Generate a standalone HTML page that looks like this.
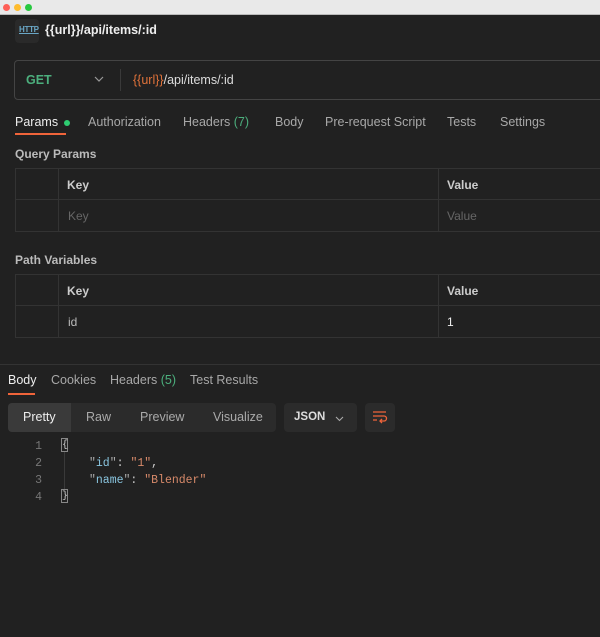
<!DOCTYPE html>
<html><head><style>
*{margin:0;padding:0;box-sizing:border-box}
body{width:600px;height:637px;background:#212121;font-family:"Liberation Sans",sans-serif;color:#fff;position:relative;overflow:hidden;font-size:12px}
.a{position:absolute}
.tb{left:0;top:0;width:600px;height:15px;background:#e9e9e9;border-bottom:1px solid #bbb}
.dot{top:4px;width:7px;height:7px;border-radius:50%}
.tab{top:115px;color:#a8a8a8;font-size:12.5px}
.g{color:#4caf7d}
.tbl{left:15px;width:600px;border:1px solid #333}
.row{height:31px;border-bottom:1px solid #333;position:relative}
.row:last-child{border-bottom:none}
.c1{position:absolute;left:42px;top:0;bottom:0;border-left:1px solid #333}
.c2{position:absolute;left:422px;top:0;bottom:0;border-left:1px solid #333}
.t{position:absolute;top:9px;font-size:12px}
.ln{left:28px;color:#777;font-family:"Liberation Mono",monospace;font-size:11.5px;width:14px;text-align:right}
.code{font-family:"Liberation Mono",monospace;font-size:11.5px}
</style></head><body>
<div class="a tb"></div>
<div class="a dot" style="left:3px;background:#fe5f57"></div>
<div class="a dot" style="left:14px;background:#febc2e"></div>
<div class="a dot" style="left:25px;background:#28c840"></div>
<div class="a" style="left:15px;top:19px;width:24px;height:24px;background:#2a2a2a;border-radius:4px"></div>
<div class="a" style="left:19px;top:25px;font-size:8px;color:#6aa7c6;font-weight:bold;letter-spacing:-0.3px;text-decoration:underline">HTTP</div>
<div class="a" style="left:45px;top:23px;font-size:12.5px;color:#eee;font-weight:bold">{{url}}/api/items/:id</div>
<div class="a" style="left:14px;top:60px;width:600px;height:40px;border:1px solid #444;border-radius:4px"></div>
<div class="a" style="left:26px;top:73px;color:#4caf7d;font-weight:bold;font-size:12.5px">GET</div>
<svg class="a" style="left:94px;top:76px" width="10" height="6" viewBox="0 0 10 6"><path d="M1 1l4 4 4-4" stroke="#999" stroke-width="1.2" fill="none"/></svg>
<div class="a" style="left:120px;top:69px;width:1px;height:22px;background:#3a3a3a"></div>
<div class="a" style="left:133px;top:73px;font-size:12.5px;color:#ddd"><span style="color:#e0723a">{{url}}</span>/api/items/:id</div>
<div class="a tab" style="left:15px;color:#eee">Params <span style="display:inline-block;width:6px;height:6px;border-radius:50%;background:#2ecc71;vertical-align:middle;margin-left:2px"></span></div>
<div class="a" style="left:15px;top:133px;width:51px;height:2px;background:#f0643a"></div>
<div class="a tab" style="left:88px">Authorization</div>
<div class="a tab" style="left:183px">Headers <span class="g">(7)</span></div>
<div class="a tab" style="left:275px">Body</div>
<div class="a tab" style="left:325px">Pre-request Script</div>
<div class="a tab" style="left:447px">Tests</div>
<div class="a tab" style="left:500px">Settings</div>
<div class="a" style="left:15px;top:147px;color:#bbb;font-weight:bold;font-size:12px">Query Params</div>
<div class="a tbl" style="top:168px">
<div class="row"><div class="c1"></div><div class="c2"></div><span class="t" style="left:51px;color:#ccc;font-weight:bold">Key</span><span class="t" style="left:431px;color:#ccc;font-weight:bold">Value</span></div>
<div class="row"><div class="c1"></div><div class="c2"></div><span class="t" style="left:52px;color:#666">Key</span><span class="t" style="left:431px;color:#666">Value</span></div>
</div>
<div class="a" style="left:15px;top:253px;color:#bbb;font-weight:bold;font-size:12px">Path Variables</div>
<div class="a tbl" style="top:274px">
<div class="row"><div class="c1"></div><div class="c2"></div><span class="t" style="left:51px;color:#ccc;font-weight:bold">Key</span><span class="t" style="left:431px;color:#ccc;font-weight:bold">Value</span></div>
<div class="row"><div class="c1"></div><div class="c2"></div><span class="t" style="left:52px;color:#bbb">id</span><span class="t" style="left:431px;color:#eee">1</span></div>
</div>
<div class="a" style="left:0;top:364px;width:600px;height:1px;background:#333"></div>
<div class="a" style="left:8px;top:373px;font-size:12.5px;color:#eee">Body</div>
<div class="a" style="left:8px;top:393px;width:27px;height:2px;background:#f0643a"></div>
<div class="a" style="left:51px;top:373px;font-size:12.5px;color:#a8a8a8">Cookies</div>
<div class="a" style="left:110px;top:373px;font-size:12.5px;color:#a8a8a8">Headers <span class="g">(5)</span></div>
<div class="a" style="left:190px;top:373px;font-size:12.5px;color:#a8a8a8">Test Results</div>
<div class="a" style="left:8px;top:403px;width:268px;height:29px;background:#2b2b2b;border-radius:4px"></div>
<div class="a" style="left:8px;top:403px;width:63px;height:29px;background:#3a3a3a;border-radius:4px 0 0 4px"></div>
<div class="a" style="left:23px;top:410px;font-size:12.5px;color:#eee">Pretty</div>
<div class="a" style="left:86px;top:410px;font-size:12.5px;color:#aaa">Raw</div>
<div class="a" style="left:140px;top:410px;font-size:12.5px;color:#aaa">Preview</div>
<div class="a" style="left:213px;top:410px;font-size:12.5px;color:#aaa">Visualize</div>
<div class="a" style="left:284px;top:403px;width:73px;height:29px;background:#2b2b2b;border-radius:4px"></div>
<div class="a" style="left:294px;top:411px;font-size:11.5px;color:#ddd;font-weight:bold">JSON</div>
<svg class="a" style="left:335px;top:416px" width="9" height="6" viewBox="0 0 9 6"><path d="M1 1l3.5 3.5L8 1" stroke="#aaa" stroke-width="1.1" fill="none"/></svg>
<div class="a" style="left:365px;top:403px;width:30px;height:29px;background:#2b2b2b;border-radius:4px"></div>
<svg class="a" style="left:372px;top:410px" width="16" height="14" viewBox="0 0 16 14"><path d="M1 2h13M1 6h11a2.5 2.5 0 0 1 0 5H8M10 9l-2 2 2 2M1 10h4" stroke="#f0643a" stroke-width="1.3" fill="none"/></svg>
<div class="a ln" style="top:440px">1</div>
<div class="a ln" style="top:457px">2</div>
<div class="a ln" style="top:474px">3</div>
<div class="a ln" style="top:491px">4</div>
<div class="a" style="left:61px;top:438px;width:7px;height:14px;border:1px solid #888"></div>
<div class="a" style="left:61px;top:489px;width:7px;height:14px;border:1px solid #888"></div>
<div class="a" style="left:64px;top:452px;width:1px;height:37px;background:#3a3a3a"></div>
<div class="a code" style="left:62px;top:440px;color:#ccc;font-size:10px">{</div>
<div class="a code" style="left:62px;top:491px;color:#ccc;font-size:10px">}</div>
<div class="a code" style="left:89px;top:457px;color:#ccc"><span style="color:#aaa">"</span><span style="color:#8ac6e0">id</span><span style="color:#aaa">"</span>: <span style="color:#d88a6a">"1"</span>,</div>
<div class="a code" style="left:89px;top:474px;color:#ccc"><span style="color:#aaa">"</span><span style="color:#8ac6e0">name</span><span style="color:#aaa">"</span>: <span style="color:#d88a6a">"Blender"</span></div>
</body></html>
